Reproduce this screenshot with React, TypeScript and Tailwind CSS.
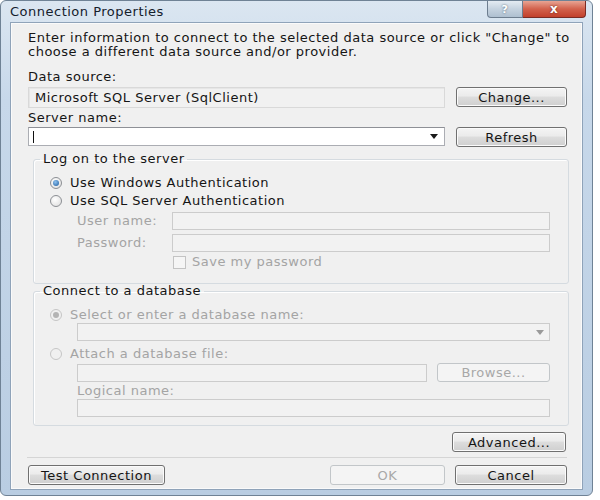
import type { ReactNode } from 'react';

type BtnProps = { children: ReactNode; className?: string; disabled?: boolean };

function Button({ children, className = '', disabled }: BtnProps) {
  return (
    <div
      className={
        'flex items-center justify-center rounded-[3px] border text-[13px] leading-none ' +
        (disabled
          ? 'border-[#c2c6c9] bg-[#f4f4f4] text-[#a8a8a8] '
          : 'border-[#707070] bg-[linear-gradient(#f4f4f4,#ebebeb_45%,#dddddd_50%,#cfcfcf)] text-[#151515] shadow-[inset_0_0_0_1px_#fbfbfb] ') +
        className
      }
    >
      {children}
    </div>
  );
}

function Arrow({ muted }: { muted?: boolean }) {
  return (
    <svg width="8" height="5" viewBox="0 0 8 5" className="shrink-0">
      <path d="M0 0h8L4 5z" fill={muted ? '#9a9a9a' : '#1a1a1a'} />
    </svg>
  );
}

function Radio({ checked, disabled }: { checked?: boolean; disabled?: boolean }) {
  return (
    <span
      className={
        'flex h-[12px] w-[12px] shrink-0 items-center justify-center rounded-full border ' +
        (disabled
          ? 'border-[#c6c6c6] bg-[#f0f0f0]'
          : 'border-[#8c8f94] bg-[radial-gradient(circle_at_40%_35%,#ffffff,#dcdcdc)]')
      }
    >
      {checked && (
        <span
          className={
            'h-[6px] w-[6px] rounded-full ' +
            (disabled
              ? 'bg-[#b4b4b4]'
              : 'bg-[radial-gradient(circle_at_40%_35%,#8ec2f0,#1c5a9c)]')
          }
        />
      )}
    </span>
  );
}

function Field({ className = '', disabled, children }: { className?: string; disabled?: boolean; children?: ReactNode }) {
  return (
    <div
      className={
        'flex items-center border ' +
        (disabled
          ? 'border-[#cccccc] bg-[#f2f2f2] '
          : 'border-[#abadb3] border-t-[#8e9096] bg-white ') +
        className
      }
    >
      {children}
    </div>
  );
}

function Group({ title, children, className = '' }: { title: string; children: ReactNode; className?: string }) {
  return (
    <fieldset
      className={
        'ml-[5px] w-[536px] rounded-[3px] border border-[#d5dbe0] shadow-[inset_1px_1px_0_#ffffff] ' +
        className
      }
    >
      <legend className="ml-[6px] px-[3px] text-[13px] leading-[14px] text-[#151515]">{title}</legend>
      {children}
    </fieldset>
  );
}

export default function App() {
  return (
    <div className="h-[500px] w-[600px] bg-white font-['DejaVu_Sans',sans-serif] text-[13px] leading-[16px] tracking-[0.5px] text-[#151515]">
      <div className="flex h-[496px] w-[593px] flex-col rounded-[6px] border border-[#6f8295] bg-[linear-gradient(#dbe6f1,#c7d8ea_20%,#b9cde2)] px-[9px] pb-[5px]">
        {/* title bar */}
        <div className="-mx-[9px] flex h-[21px] items-start justify-between pl-[9px] pr-[6px]">
          <span className="mt-[3px] text-[13px] leading-[16px] text-[#14202c]">Connection Properties</span>
          <div className="flex">
            <div className="flex h-[17px] w-[36px] items-center justify-center rounded-bl-[4px] border border-t-0 border-[#6d7d8f] bg-[linear-gradient(#e4ebf2,#c5d2df_50%,#aebfd0)] text-[11px] font-bold leading-none text-white [text-shadow:0_0_2px_#4a5b6c]">
              ?
            </div>
            <div className="flex h-[17px] w-[63px] items-center justify-center rounded-br-[4px] border border-l-0 border-t-0 border-[#7a2b24] bg-[linear-gradient(#e8a493,#d2614c_50%,#c2402c)] text-[12px] font-bold leading-none text-white [text-shadow:0_0_2px_#5a1a10]">
              x
            </div>
          </div>
        </div>

        {/* client area */}
        <div className="flex flex-1 flex-col border border-[#8fa3b9] bg-[#f0f0f0] pl-[17px] pr-[15px] pt-[8px] shadow-[inset_0_0_0_1px_#fafafa]">
          <div className="h-[14px] whitespace-nowrap leading-[14px]">
            Enter information to connect to the selected data source or click "Change" to
          </div>
          <div className="h-[14px] whitespace-nowrap leading-[14px]">
            choose a different data source and/or provider.
          </div>

          <div className="mt-[11px] leading-[14px]">Data source:</div>
          <div className="mt-[3px] flex items-start gap-[11px]">
            <div className="flex h-[21px] w-[417px] items-center border border-[#d9d9d9] bg-[#f1f1f1] pl-[6px] shadow-[inset_1px_1px_0_#e6e6e6]">
              Microsoft SQL Server (SqlClient)
            </div>
            <Button className="h-[20px] w-[111px]">Change...</Button>
          </div>

          <div className="mt-[3px] leading-[14px]">Server name:</div>
          <div className="mt-[2px] flex items-start gap-[11px]">
            <Field className="h-[19px] w-[417px] justify-between pl-[4px] pr-[6px]">
              <span className="h-[12px] w-px bg-[#111111]" />
              <Arrow />
            </Field>
            <Button className="h-[20px] w-[111px]">Refresh</Button>
          </div>

          <Group title="Log on to the server" className="mt-[5px] pb-[13px]">
            <div className="mt-[9px] flex h-[16px] items-center gap-[8px] pl-[16px]">
              <Radio checked />
              <span>Use Windows Authentication</span>
            </div>
            <div className="mt-[2px] flex h-[16px] items-center gap-[8px] pl-[16px]">
              <Radio />
              <span>Use SQL Server Authentication</span>
            </div>
            <div className="mt-[3px] flex h-[18px] items-center pl-[43px] text-[#a4a4a4]">
              <span className="w-[95px]">User name:</span>
              <Field disabled className="h-[18px] w-[378px]" />
            </div>
            <div className="mt-[4px] flex h-[18px] items-center pl-[43px] text-[#a4a4a4]">
              <span className="w-[95px]">Password:</span>
              <Field disabled className="h-[18px] w-[378px]" />
            </div>
            <div className="mt-[2px] flex h-[16px] items-center gap-[6px] pl-[139px] text-[#a4a4a4]">
              <span className="h-[13px] w-[13px] border border-[#c3c3c3] bg-[#f5f5f5]" />
              <span>Save my password</span>
            </div>
          </Group>

          <Group title="Connect to a database" className="pb-[8px]">
            <div className="mt-[9px] flex h-[16px] items-center gap-[8px] pl-[16px] text-[#a4a4a4]">
              <Radio checked disabled />
              <span>Select or enter a database name:</span>
            </div>
            <div className="pl-[43px]">
              <Field disabled className="h-[18px] w-[473px] justify-end pr-[5px]">
                <Arrow muted />
              </Field>
            </div>
            <div className="mt-[5px] flex h-[16px] items-center gap-[8px] pl-[16px] text-[#a4a4a4]">
              <Radio disabled />
              <span>Attach a database file:</span>
            </div>
            <div className="mt-px flex items-center gap-[10px] pl-[43px]">
              <Field disabled className="h-[18px] w-[350px]" />
              <Button disabled className="h-[19px] w-[113px]">
                Browse...
              </Button>
            </div>
            <div className="mt-[2px] pl-[43px] leading-[14px] text-[#a4a4a4]">Logical name:</div>
            <div className="mt-px pl-[43px]">
              <Field disabled className="h-[18px] w-[473px]" />
            </div>
          </Group>

          <div className="mt-[6px] flex justify-end pr-px">
            <Button className="h-[20px] w-[114px]">Advanced...</Button>
          </div>

          <div className="-ml-px mt-[5px] h-[2px] border-t border-[#d5d5d5] border-b-white" />

          <div className="mt-[6px] flex items-start">
            <Button className="h-[20px] w-[137px]">Test Connection</Button>
            <Button disabled className="ml-[165px] h-[20px] w-[115px]">
              OK
            </Button>
            <Button className="ml-[10px] h-[20px] w-[112px]">Cancel</Button>
          </div>
        </div>
      </div>
    </div>
  );
}
